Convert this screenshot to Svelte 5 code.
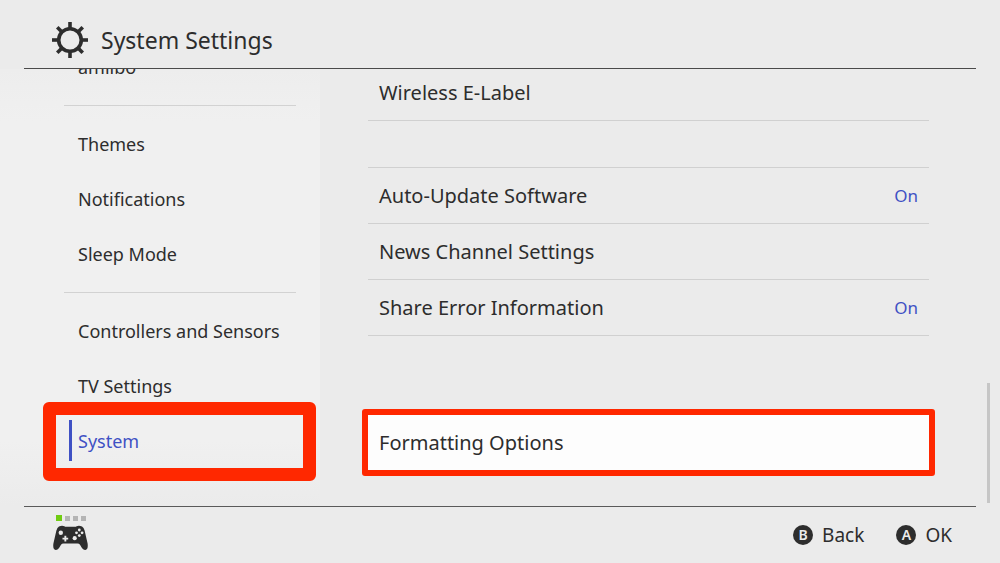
<script>
    const menu = [
        ["amiibo"],
        ["Themes", "Notifications", "Sleep Mode"],
        ["Controllers and Sensors", "TV Settings", "System"],
    ];

    const options = [
        { label: "Auto-Update Software", value: "On" },
        { label: "News Channel Settings" },
        { label: "Share Error Information", value: "On" },
    ];

    const teeth = [0, 45, 90, 135, 180, 225, 270, 315];

    let current = $state("System");
</script>

<div class="screen">
    <header>
        <svg class="gear" viewBox="0 0 36 36" aria-hidden="true">
            <circle cx="18" cy="18" r="11.3" />
            {#each teeth as angle}
                <path d="M18 7V0" transform="rotate({angle} 18 18)" />
            {/each}
        </svg>
        <h1>System Settings</h1>
    </header>

    <main>
        <nav>
            {#each menu as group}
                <div class="group">
                    {#each group as item}
                        <button
                            class="item"
                            class:selected={item === current}
                            onclick={() => (current = item)}>{item}</button
                        >
                    {/each}
                </div>
            {/each}
        </nav>

        <section>
            <button class="row">Wireless E-Label</button>
            <div class="rows">
                {#each options as { label, value }}
                    <button class="row">
                        <span>{label}</span>
                        {#if value}<span class="value">{value}</span>{/if}
                    </button>
                {/each}
            </div>
            <button class="format">Formatting Options</button>
        </section>

        <div class="scroll"></div>
    </main>

    <footer>
        <div class="player">
            <div class="leds"><i class="lit"></i><i></i><i></i><i></i></div>
            <svg viewBox="0 0 35 26" aria-hidden="true">
                <path
                    fill="#2d2d2d"
                    d="M6 1.4Q9 0 11.4 1.2Q12 1.8 13 1.8H22Q23 1.8 23.6 1.2Q26 0 29 1.4Q30.8 2.4 31.6 5.5L34.6 18.5Q35.4 24.6 32.4 25Q30 25.3 28.6 22.6L27 19.8Q26.2 18.6 24.5 18.6H10.5Q8.8 18.6 8 19.8L6.4 22.6Q5 25.3 2.6 25Q-.4 24.6 .4 18.5L3.4 5.5Q4.2 2.4 6 1.4Z"
                />
                <g fill="#ebebeb">
                    <circle cx="7.8" cy="7.8" r="2.2" />
                    <circle cx="21.7" cy="13.2" r="2.1" />
                    <path d="M11.4 10.8h1.9v1.9h1.9v1.9h-1.9v1.9h-1.9v-1.9h-1.9v-1.9h1.9z" />
                    <circle cx="26.3" cy="5" r="1.4" />
                    <circle cx="26.3" cy="10.6" r="1.4" />
                    <circle cx="23.5" cy="7.8" r="1.4" />
                    <circle cx="29.1" cy="7.8" r="1.4" />
                </g>
            </svg>
        </div>
        <button class="hint"><b>B</b>Back</button>
        <button class="hint"><b>A</b>OK</button>
    </footer>
</div>

<style>
    :global(body) {
        margin: 0;
    }

    .screen {
        display: flex;
        flex-direction: column;
        height: 100vh;
        background: #ebebeb;
        color: #2d2d2d;
        font-family: "Noto Sans", "Open Sans", sans-serif;
    }

    button {
        padding: 0;
        border: 0;
        background: none;
        color: inherit;
        font: inherit;
        text-align: left;
        cursor: pointer;
    }

    header {
        display: flex;
        align-items: center;
        gap: 13px;
        height: 56px;
        margin: 0 24px;
        padding: 12px 28px 0;
        border-bottom: 1px solid #4a4a4a;
    }

    .gear {
        width: 36px;
        height: 36px;
        fill: none;
        stroke: #2d2d2d;
        stroke-width: 3.6;
    }

    h1 {
        margin: 0;
        font-size: 23px;
        font-weight: 400;
    }

    main {
        position: relative;
        display: flex;
        flex: 1;
        min-height: 0;
        overflow: hidden;
    }

    nav {
        display: flex;
        flex-direction: column;
        justify-content: flex-end;
        box-sizing: border-box;
        width: 32%;
        padding: 0 24px 38px 64px;
        background: linear-gradient(#ededed, #f0f0f0 12%, #f0f0f0 85%, #ebebeb);
        font-size: 18px;
    }

    .group {
        display: flex;
        flex-direction: column;
    }

    .group + .group {
        margin-top: 11px;
        padding-top: 10px;
        border-top: 1px solid #d2d2d2;
    }

    .item {
        position: relative;
        height: 55px;
        padding-left: 14px;
    }

    .selected {
        color: #3f51c4;
    }

    .selected::before {
        content: "";
        position: absolute;
        inset: 7px auto 7px 5px;
        width: 3px;
        background: #3f51c4;
    }

    .selected::after {
        content: "";
        position: absolute;
        inset: -11px -20px -13px -21px;
        border: 13px solid #ff2800;
        border-radius: 6px;
        pointer-events: none;
    }

    section {
        display: flex;
        flex: 1;
        flex-direction: column;
        justify-content: flex-end;
        padding: 0 71px 30px 48px;
        font-size: 20px;
    }

    .row {
        display: flex;
        flex-shrink: 0;
        align-items: center;
        justify-content: space-between;
        height: 56px;
        padding: 0 11px;
        border-bottom: 1px solid #d0d0d0;
    }

    .rows {
        display: flex;
        flex-shrink: 0;
        flex-direction: column;
        margin: 46px 0 73px;
        border-top: 1px solid #d0d0d0;
    }

    .value {
        color: #3f51c4;
        font-size: 17px;
    }

    .format {
        flex-shrink: 0;
        height: 67px;
        margin: 0 -6px;
        padding: 0 11px;
        border: 6px solid #ff2800;
        border-radius: 3px;
        background: #fdfdfd;
    }

    .scroll {
        position: absolute;
        right: 10px;
        bottom: 3px;
        width: 3px;
        height: 120px;
        background: #c6c6c6;
    }

    footer {
        display: flex;
        align-items: center;
        gap: 32px;
        height: 56px;
        margin: 0 24px;
        padding: 0 24px 0 29px;
        border-top: 1px solid #5a5a5a;
        font-size: 19px;
    }

    .player {
        margin-right: auto;
    }

    .player svg {
        display: block;
        width: 35px;
        height: 26px;
    }

    .leds {
        display: flex;
        align-items: center;
        gap: 3px;
        height: 6px;
        margin: -4px 0 4px 3px;
    }

    .leds i {
        width: 5px;
        height: 5px;
        background: #b4b4b4;
    }

    .leds .lit {
        width: 6px;
        height: 6px;
        background: #70cc12;
    }

    .hint {
        display: flex;
        align-items: center;
        gap: 9px;
    }

    .hint b {
        width: 20px;
        border-radius: 50%;
        background: #2d2d2d;
        color: #ebebeb;
        font-size: 14px;
        font-weight: 600;
        line-height: 20px;
        text-align: center;
    }
</style>
